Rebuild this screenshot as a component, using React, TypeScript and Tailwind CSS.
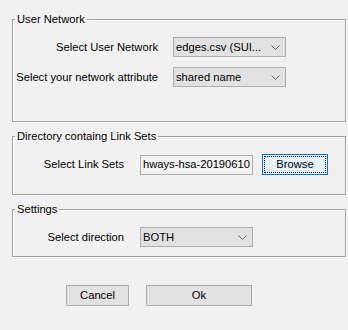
const font = { fontFamily: '"Liberation Sans", Arial, sans-serif' };

function Chevron() {
  return (
    <svg width="9" height="5" viewBox="0 0 9 5" className="shrink-0">
      <path d="M0.5 0.5 L4.5 4.5 L8.5 0.5" fill="none" stroke="#606060" strokeWidth="1" />
    </svg>
  );
}

function Combo({ value, width = "w-[113px]" }: { value: string; width?: string }) {
  return (
    <div className={`${width} h-[20px] flex items-center justify-between border border-[#adadad] bg-[#e1e1e1] pl-[2px] pr-[5px] text-black`}>
      <span className="truncate">{value}</span>
      <Chevron />
    </div>
  );
}

function Group({ title, className, children }: { title: string; className: string; children: React.ReactNode }) {
  return (
    <fieldset className={`border border-[#a0a0a0] shadow-[1px_1px_0_#ffffff,inset_1px_1px_0_#ffffff] ${className}`}>
      <legend className="ml-[2px] px-[2px] leading-[14px] text-black">{title}</legend>
      {children}
    </fieldset>
  );
}

function Button({ label, width }: { label: string; width: string }) {
  return (
    <button className={`${width} h-[21px] border border-[#adadad] bg-[#e1e1e1] text-black`}>{label}</button>
  );
}

export default function App() {
  return (
    <div className="w-[348px] h-[330px] bg-[#f0f0f0] text-[11.2px] text-black pt-[12px] overflow-hidden" style={font}>
      <div className="ml-[12px] w-[334px]">
        <Group title="User Network" className="pt-[11px] pb-[34px]">
          <div className="flex flex-col gap-[10px]">
            <div className="flex items-center">
              <span className="w-[145px] text-right">Select User Network</span>
              <span className="w-[15px]" />
              <Combo value="edges.csv (SUI..." />
            </div>
            <div className="flex items-center">
              <span className="w-[145px] text-right">Select your network attribute</span>
              <span className="w-[15px]" />
              <Combo value="shared name" />
            </div>
          </div>
        </Group>

        <Group title="Directory containg Link Sets" className="mt-[7px] pt-[11px] pb-[19px]">
          <div className="flex items-center">
            <span className="w-[111px] text-right">Select Link Sets</span>
            <span className="w-[16px]" />
            <div className="w-[113px] h-[20px] flex items-center border border-[#adadad] bg-[#f0f0f0] pl-[2px] overflow-hidden whitespace-nowrap">
              hways-hsa-20190610
            </div>
            <span className="w-[9px]" />
            <div className="w-[66px] h-[21px] border border-[#0078d7] bg-[#e5f1fb] p-[1px]">
              <div className="h-full w-full border border-dotted border-black flex items-center justify-center">
                Browse
              </div>
            </div>
          </div>
        </Group>

        <Group title="Settings" className="mt-[7px] pt-[11px] pb-[9px]">
          <div className="flex items-center">
            <span className="w-[111px] text-right">Select direction</span>
            <span className="w-[16px]" />
            <Combo value="BOTH" />
          </div>
        </Group>
      </div>

      <div className="flex mt-[28px] pl-[66px] gap-[17px]">
        <Button label="Cancel" width="w-[63px]" />
        <Button label="Ok" width="w-[106px]" />
      </div>
    </div>
  );
}
